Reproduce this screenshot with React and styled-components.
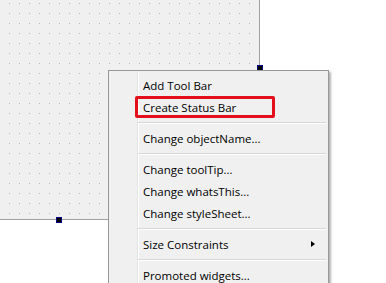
import styled, { createGlobalStyle } from 'styled-components';

const GlobalStyle = createGlobalStyle`
  html, body {
    margin: 0;
    padding: 0;
    background: #ffffff;
  }
`;

const Stage = styled.div`
  position: relative;
  width: 386px;
  height: 283px;
  overflow: hidden;
  background: #ffffff;
  font-family: "Segoe UI", "Open Sans", "Noto Sans", sans-serif;
`;

// designer form: light grey with a 10px dot grid
const FormCanvas = styled.div`
  width: 259px;
  height: 219px;
  border-right: 1px solid #a0a0a0;
  border-bottom: 1px solid #a0a0a0;
  background-color: #b4b4b4;
  background-image:
    linear-gradient(to right, #f0f0f0 9px, transparent 9px, transparent 10px, #f0f0f0 10px),
    linear-gradient(to bottom, transparent 1px, #f0f0f0 1px);
  background-size: 10px 10px, 10px 10px;
  background-position: 0 0, 0 3px;
`;

const Handle = styled.div`
  position: absolute;
  left: ${(p) => p.x}px;
  top: ${(p) => p.y}px;
  width: 4px;
  height: 4px;
  background: #000000;
  border: 1px solid #000080;
`;

const Menu = styled.div`
  position: absolute;
  left: 108px;
  top: 70px;
  width: 219px;
  padding: 3px 0;
  border: 1px solid #979797;
  box-shadow: 2px 2px 2px rgba(0, 0, 0, 0.3);
  background: linear-gradient(
    to right,
    #f0f0f0 28px,
    #e2e3e3 28px,
    #e2e3e3 29px,
    #ffffff 29px,
    #ffffff 30px,
    #f0f0f0 30px
  );
  display: flex;
  flex-direction: column;
`;

const Item = styled.div`
  position: relative;
  display: flex;
  align-items: center;
  height: 22px;
  padding-left: 34px;
  font-size: 11.5px;
  color: #000000;
  white-space: nowrap;

  ${(p) =>
    p.$marked &&
    `
    &::after {
      content: '';
      position: absolute;
      left: 26px;
      top: 0;
      width: 140px;
      height: 22px;
      box-sizing: border-box;
      border: 3px solid #e3101c;
      border-radius: 2px;
    }
  `}
`;

const SubArrow = styled.span`
  margin-left: auto;
  margin-right: 13px;
  width: 0;
  height: 0;
  border-left: 4px solid #000000;
  border-top: 3.5px solid transparent;
  border-bottom: 3.5px solid transparent;
`;

const Separator = styled.div`
  height: 1px;
  margin: 4px 2px 3px 29px;
  background: #d7d7d7;
  border-bottom: 1px solid #ffffff;
`;

const entries = [
  { label: 'Add Tool Bar' },
  { label: 'Create Status Bar', marked: true },
  { sep: true },
  { label: 'Change objectName...' },
  { sep: true },
  { label: 'Change toolTip...' },
  { label: 'Change whatsThis...' },
  { label: 'Change styleSheet...' },
  { sep: true },
  { label: 'Size Constraints', sub: true },
  { sep: true },
  { label: 'Promoted widgets...' },
];

const App = () => {
  return (
    <Stage>
      <GlobalStyle />
      <FormCanvas />
      <Handle x={257} y={65} />
      <Handle x={56} y={217} />

      <Menu>
        {entries.map((e, i) =>
          e.sep ? (
            <Separator key={i} />
          ) : (
            <Item key={i} $marked={e.marked}>
              {e.label}
              {e.sub && <SubArrow />}
            </Item>
          )
        )}
      </Menu>
    </Stage>
  );
};

export default App;
